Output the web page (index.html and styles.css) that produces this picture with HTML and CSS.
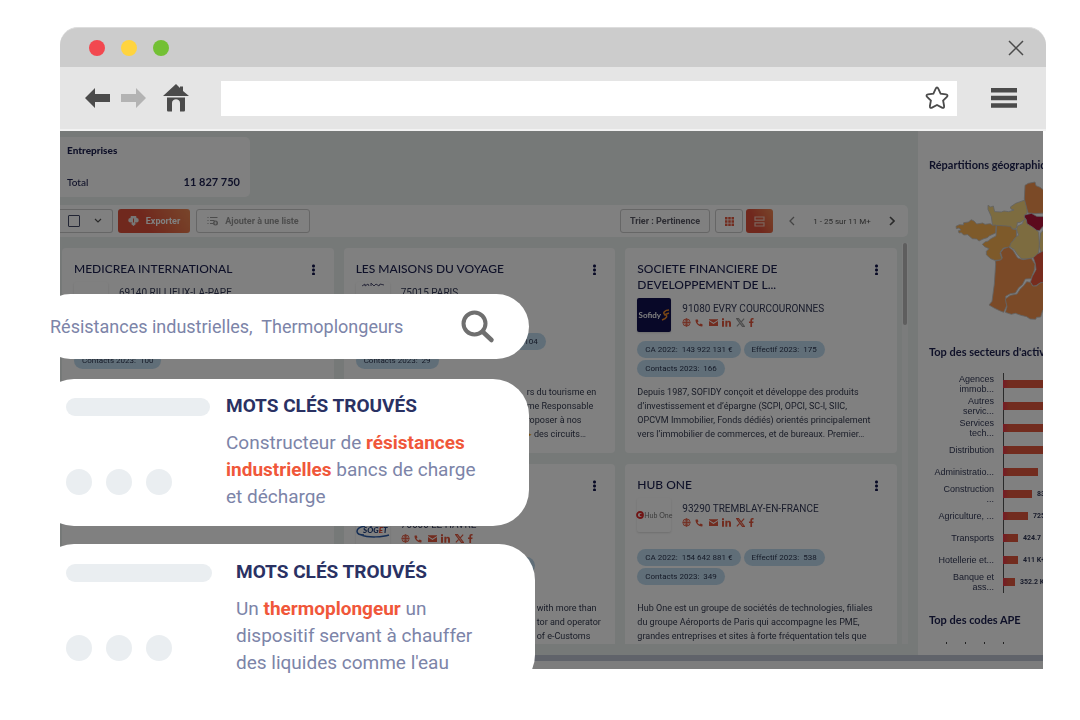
FILE: index.html
```html
<!DOCTYPE html>
<html lang="fr">
<head>
<meta charset="utf-8">
<title>Recherche par mots clés</title>
<link rel="stylesheet" href="styles.css">
</head>
<body>
<svg class="sprite" aria-hidden="true">
  <symbol id="globe" viewBox="0 0 16 16"><g fill="none" stroke="currentColor" stroke-width="1.5"><circle cx="8" cy="8" r="6.5"/><ellipse cx="8" cy="8" rx="2.8" ry="6.5"/><path d="M1.5 8h13M8 1.5v13"/></g></symbol>
  <symbol id="phone" viewBox="0 0 16 16"><path fill="currentColor" d="M2 1h3.5l1.4 4-2 1.8c1 2 2.300 3.300 4.300 4.300l1.800-2 4 1.400V14c0 .6-.4 1-1 1C7 15 1 9 1 2c0-.6.400-1 1-1z"/></symbol>
  <symbol id="mail" viewBox="0 0 16 16"><path fill="currentColor" d="M0 2h16v1.500L8 8.500 0 3.500zM0 5.500l8 5 8-5V14H0z"/></symbol>
  <symbol id="linkedin" viewBox="0 0 16 16"><path fill="currentColor" d="M0 5h3.500v10.500H0zM0 .5h3.500v3H0zM6 5h3.300v1.500C10 5.400 11 4.800 12.400 4.800c2.600 0 3.600 1.700 3.600 4.500v6.200h-3.500V9.900c0-1.400-.4-2.200-1.500-2.200s-1.600.8-1.600 2.200v5.600H6z"/></symbol>
  <symbol id="xlogo" viewBox="0 0 16 16"><path fill="none" stroke="currentColor" stroke-width="2" d="M1 1h3.500L15 15h-3.500zM14.500 1L9 7.200M7 9L1.500 15"/></symbol>
  <symbol id="facebook" viewBox="0 0 16 16"><path fill="currentColor" d="M6 16V9H3.500V6H6V4c0-2.600 1.500-4 3.800-4 1 0 1.900.1 1.900.1v2.700h-1.200C9.300 2.800 9 3.400 9 4.200V6h2.700l-.5 3H9v7z"/></symbol>
</svg>

<main class="stage">
  <section class="browser">
    <header class="titlebar">
      <span class="light light-red"></span><span class="light light-yellow"></span><span class="light light-green"></span>
      <button class="plain close" aria-label="Fermer"><svg width="16" height="16" viewBox="0 0 16 16"><path d="M1 1l14 14M15 1L1 15" stroke="#4b4b4b" stroke-width="1.500"/></svg></button>
    </header>
    <nav class="navbar">
      <button class="plain" aria-label="Précédent"><svg width="26" height="20" viewBox="0 0 26 20"><path d="M0 10L10 0v6h15v8H10v6z" fill="#4b4b4b"/></svg></button>
      <button class="plain forward" aria-label="Suivant"><svg width="26" height="20" viewBox="0 0 26 20"><path d="M25 10L15 0v6H0v8h15v6z" fill="#b3b3b3"/></svg></button>
      <button class="plain home" aria-label="Accueil"><svg width="26" height="28" viewBox="0 0 26 28"><path fill="#4b4b4b" d="M13 0l4 4V2.500h3V7l6 5H0zM4 13.500h18V26c0 1-.5 1.500-1.500 1.500H17V19c0-5-8-5-8 0v8.500H5.500c-1 0-1.500-.5-1.500-1.500z"/></svg></button>
      <div class="address">
        <input type="text" aria-label="Adresse">
        <button class="plain" aria-label="Favori"><svg width="24" height="24" viewBox="0 0 24 24"><path d="M12 1.500c.8 0 1 .5 1.300 1.200l2.300 5 5.400.7c1.600.2 2 1.300.9 2.400l-3.800 3.700 1 5.500c.2 1.700-.7 2.400-2.100 1.600L12 19l-5 2.600c-1.400.8-2.300.1-2.100-1.600l1-5.500-3.800-3.700C1 9.700 1.400 8.600 3 8.400l5.400-.7 2.300-5c.3-.7.500-1.200 1.300-1.200z" fill="none" stroke="#4b4b4b" stroke-width="1.800"/></svg></button>
      </div>
      <button class="plain menu" aria-label="Menu"><svg width="26" height="20" viewBox="0 0 26 20"><path d="M0 0h26v4.500H0zM0 7.700h26v4.500H0zM0 15.300h26v4.500H0z" fill="#4b4b4b"/></svg></button>
    </nav>

    <div class="app">
      <div class="columns">
        <div class="results">
          <section class="summary">
            <h2>Entreprises</h2>
            <p><span>Total</span><strong>11 827 750</strong></p>
          </section>

          <div class="toolbar">
            <div class="select-all"><input type="checkbox" aria-label="Tout sélectionner"><svg width="8" height="6" viewBox="0 0 8 6"><path d="M1 1l3 3 3-3" fill="none" stroke="#555" stroke-width="1.200"/></svg></div>
            <button class="btn btn-primary"><svg width="11" height="10" viewBox="0 0 22 20"><path fill="#eee" d="M5 13a4.500 4.500 0 010-9 6 6 0 0112 0 4.500 4.500 0 010 9h-3v2h3l-6 5-6-5h3v-2z"/><path d="M11 5v8" stroke="#e4573d" stroke-width="2"/></svg>Exporter</button>
            <button class="btn btn-muted"><svg width="11" height="10" viewBox="0 0 22 20"><path d="M1 3h2M6 3h15M1 9h2M6 9h9M1 15h2M6 15h6" stroke="#999" stroke-width="2"/><circle cx="17" cy="14" r="5" fill="#999"/><path d="M17 11v6M14 14h6" stroke="#fff" stroke-width="1.400"/></svg>Ajouter à une liste</button>
            <button class="btn sort">Trier : Pertinence</button>
            <button class="btn view" aria-label="Grille"><svg width="9" height="9" viewBox="0 0 9 9"><path d="M0 0h2.500v2.500H0zM3.250 0h2.500v2.500h-2.500zM6.500 0H9v2.500H6.500zM0 3.250h2.500v2.500H0zM3.250 3.250h2.500v2.500h-2.500zM6.500 3.250H9v2.500H6.500zM0 6.500h2.500V9H0zM3.250 6.500h2.500V9h-2.500zM6.500 6.500H9V9H6.500z" fill="#e4573d"/></svg></button>
            <button class="btn btn-primary view" aria-label="Liste"><svg width="11" height="11" viewBox="0 0 11 11"><path d="M1 1h9v3.200H1zM1 6.800h9V10H1z" fill="none" stroke="#f5c9b8" stroke-width="1.200"/></svg></button>
            <div class="pager">
              <button class="plain" aria-label="Page précédente"><svg width="6" height="10" viewBox="0 0 6 10"><path d="M5 1L1 5l4 4" fill="none" stroke="#888" stroke-width="1.300"/></svg></button>
              <span>1 - 25 sur 11 M+</span>
              <button class="plain" aria-label="Page suivante"><svg width="6" height="10" viewBox="0 0 6 10"><path d="M1 1l4 4-4 4" fill="none" stroke="#555" stroke-width="1.600"/></svg></button>
            </div>
          </div>

          <div class="list">
            <div class="cards">
              <article class="card">
                <div class="card-top">
                  <header><h3>MEDICREA INTERNATIONAL</h3><button class="plain kebab" aria-label="Options"></button></header>
                  <div class="identity"><span class="logo"></span><div><p>69140 RILLIEUX-LA-PAPE</p></div></div>
                </div>
                <ul class="pills"><li class="row-space"></li><li>Contacts 2023:&nbsp; 100</li></ul>
                <p class="desc"></p>
              </article>

              <article class="card">
                <div class="card-top">
                  <header><h3>LES MAISONS DU VOYAGE</h3><button class="plain kebab" aria-label="Options"></button></header>
                  <div class="identity"><span class="logo logo-travel"><svg width="22" height="6" viewBox="0 0 22 6"><path d="M0 4l3-2v2l3-2 1 2M9 4V1l3 3 2-2 3 2 1-2 4 1" fill="none" stroke="#557" stroke-width="1"/></svg></span><div><p>75015 PARIS</p></div></div>
                </div>
                <ul class="pills"><li class="offset">Effectif 2023:&nbsp; 104</li><li>Contacts 2023:&nbsp; 29</li></ul>
                <p class="desc desc-travel">rs du tourisme en<br>me Responsable<br>roposer à nos<br><i>▸</i> des circuits…</p>
              </article>

              <article class="card">
                <div class="card-top">
                  <header><h3>SOCIETE FINANCIERE DE DEVELOPPEMENT DE L...</h3><button class="plain kebab" aria-label="Options"></button></header>
                  <div class="identity">
                    <span class="logo logo-sofidy">Sofidy<svg width="9" height="12" viewBox="0 0 9 12"><path d="M8 1C4 1 1 4 4 5.500S6 9 1 11M3 6l5-2" fill="none" stroke="#f28c28" stroke-width="1.500"/></svg></span>
                    <div><p>91080 EVRY COURCOURONNES</p><svg class="social" width="74" height="9" viewBox="0 0 74 9" role="img" aria-label="Contacts"><use href="#globe" width="9" height="9"/><use href="#phone" x="13" y="1" width="8" height="8"/><use href="#mail" x="27" width="9" height="9"/><use href="#linkedin" x="40" width="9" height="9"/><use href="#xlogo" class="off" x="54" width="9" height="9"/><use href="#facebook" x="65" width="9" height="9"/></svg></div>
                  </div>
                </div>
                <ul class="pills"><li>CA 2022:&nbsp; 143 922 131 €</li><li>Effectif 2023:&nbsp; 175</li><li>Contacts 2023:&nbsp; 166</li></ul>
                <p class="desc">Depuis 1987, SOFIDY conçoit et développe des produits<br>d’investissement et d’épargne (SCPI, OPCI, SC-I, SIIC,<br>OPCVM Immobilier, Fonds dédiés) orientés principalement<br>vers l’immobilier de commerces, et de bureaux. Premier…</p>
              </article>

              <article class="card"></article>

              <article class="card">
                <div class="card-top">
                  <header class="two-lines"><h3></h3><button class="plain kebab" aria-label="Options"></button></header>
                  <div class="identity">
                    <span class="logo"><svg width="34" height="16" viewBox="0 0 34 16"><path d="M9 3C-2 5-1 12 8 12M5 12c8 3 22 2 28 0" fill="none" stroke="#2a5caa" stroke-width="1.500"/><text x="7" y="10" class="soget">SÔG<tspan fill="#e0402c">E</tspan>T</text></svg></span>
                    <div><p>76600 LE HAVRE</p><svg class="social" width="74" height="9" viewBox="0 0 74 9" role="img" aria-label="Contacts"><use href="#globe" width="9" height="9"/><use href="#phone" x="13" y="1" width="8" height="8"/><use href="#mail" x="27" width="9" height="9"/><use href="#linkedin" x="40" width="9" height="9"/><use href="#xlogo" x="54" width="9" height="9"/><use href="#facebook" x="65" width="9" height="9"/></svg></div>
                  </div>
                </div>
                <ul class="pills"><li class="wide"></li><li class="row-space"></li></ul>
                <p class="desc desc-customs">with more than<br>tor and operator<br>of e-Customs</p>
              </article>

              <article class="card">
                <div class="card-top">
                  <header><h3>HUB ONE</h3><button class="plain kebab" aria-label="Options"></button></header>
                  <div class="identity">
                    <span class="logo logo-hub"><svg width="8" height="8" viewBox="0 0 8 8"><circle cx="4" cy="4" r="3" fill="none" stroke="#e02a2a" stroke-width="1.800"/><circle cx="5" cy="4" r="1.300" fill="#e02a2a"/></svg>Hub One</span>
                    <div><p>93290 TREMBLAY-EN-FRANCE</p><svg class="social" width="74" height="9" viewBox="0 0 74 9" role="img" aria-label="Contacts"><use href="#globe" width="9" height="9"/><use href="#phone" x="13" y="1" width="8" height="8"/><use href="#mail" x="27" width="9" height="9"/><use href="#linkedin" x="40" width="9" height="9"/><use href="#xlogo" x="54" width="9" height="9"/><use href="#facebook" x="65" width="9" height="9"/></svg></div>
                  </div>
                </div>
                <ul class="pills"><li>CA 2022:&nbsp; 154 642 881 €</li><li>Effectif 2023:&nbsp; 538</li><li>Contacts 2023:&nbsp; 349</li></ul>
                <p class="desc">Hub One est un groupe de sociétés de technologies, filiales<br>du groupe Aéroports de Paris qui accompagne les PME,<br>grandes entreprises et sites à forte fréquentation tels que</p>
              </article>
            </div>
            <div class="track"><div class="thumb"></div></div>
          </div>
        </div>

        <aside class="side">
          <h2>Répartitions géographiques</h2>
          <svg class="map" width="106" height="142" viewBox="165 94 318 426" role="img" aria-label="Carte de France">
            <g stroke="#c4c4c4" stroke-width="2.500" stroke-linejoin="round">
              <path fill="#fad880" d="M264 167l8 5 8-3 4 17 20 1 8-3 14 2 16-5-9-3-2-6 16-11 22-8 8-3 5 13-1 29-8 5 3 12-15 9-9 1-2 16-9 4-11-8-40-3-12 3-4-30-10-22z"/>
              <path fill="#fcb354" d="M168 230l10-5 12 1 1-7 15-2 7-7 9 4 8 9 18-3 7 4 16-2 6 5 11-1-1 24-18 8-7 6-13 4-12 6-7-6-13-1-14-12-12 1-7-7-7 1-2-7 8-2-6-6-8 2z"/>
              <path fill="#fcb354" d="M290 227l42 3 5 8 12 2 1 22-8 7-7 15-8 9-17 2-7 9-3 7 5 14-3 6-18 1-12-5-13-12 0-10 8-8-13-6-7-7 9-8 9-2 6-6 17-9z"/>
              <path fill="#fad880" d="M376 207l8 15 27 20 5 6 2 37-2 22-4 12-14 6-20 3-14-1-12-13-10-15-13-8 4-12 7-6 8-12 8-4-6-16 2-11 15-8 3-7z"/>
              <path fill="#f6944e" d="M373 148l2-41 10-6 20-4 3 11 12 5 20 15 25 18-3 42-55 4-23-2z"/>
              <path fill="#b8143a" d="M374 196l20-5 16 9 26 1 3 25-11 5-10 12-8-1-13-10-16-10-2-12-6-8z"/>
              <path fill="#fad880" d="M440 190l43-30v150h-60l-5-22 4-38 12-12z"/>
              <path fill="#f6944e" d="M311 297l15-5 13 10 14 23 16 5 25-4 11 18-2 18-10 25-17 1-9 17-11 9-10 16-15 2-14 8 1 16 2 12-9 20-12-5-15-7-17-10 9-11 7-52 4-60-1-9 16-3 5-6-5-16z"/>
              <path fill="#ee583c" d="M412 313l22-12 48-4v130l-42-10-12-18-9 2-11 7-9 2-8-12 6-18 11-20-2-18-6-18z"/>
              <path fill="#f6944e" d="M380 396l12 2 6 11 11 0 11-9 8-2 13 17 42 15-30 38-25 14-6 20-12 1-3 6-17-1-10-7-17-4-17-6-12 3-18-6 5-17-5-23 15-11 20-4 9-14 12-12z"/>
            </g>
          </svg>
          <h2>Top des secteurs d'activité</h2>
          <ul class="chart">
            <li><span>Agences<br>immob...</span><b style="width:60px"></b></li>
            <li><span>Autres<br>servic...</span><b style="width:58px"></b></li>
            <li><span>Services<br>tech...</span><b style="width:52px"></b></li>
            <li><span>Distribution</span><b style="width:46px"></b></li>
            <li><span>Administratio...</span><b style="width:35px"></b></li>
            <li><span>Construction<br>...</span><b style="width:29px"></b><em>831 K+</em></li>
            <li><span>Agriculture, ...</span><b style="width:25px"></b><em>725 K+</em></li>
            <li><span>Transports</span><b style="width:15px"></b><em>424.7 K+</em></li>
            <li><span>Hotellerie et...</span><b style="width:15px"></b><em>411 K+</em></li>
            <li><span>Banque et<br>ass...</span><b style="width:12px"></b><em>352.2 K+</em></li>
          </ul>
          <h2>Top des codes APE</h2>
          <div class="ticks"><i></i><i></i><i></i><i></i></div>
        </aside>
      </div>
      <div class="scroll-x"></div>
    </div>
  </section>

  <section class="overlays">
    <form class="search">
      <input type="text" aria-label="Mots clés" value="Résistances industrielles,  Thermoplongeurs">
      <button class="plain" type="button" aria-label="Rechercher"><svg width="34" height="34" viewBox="0 0 34 34"><g fill="none" stroke="#6f6f6f"><circle cx="13.500" cy="13.500" r="11" stroke-width="4"/><path d="M22 22l8.500 8" stroke-width="4.500" stroke-linecap="round"/></g></svg></button>
    </form>
    <article class="match">
      <div class="skeleton"><span class="bar"></span><span class="dots"><i></i><i></i><i></i></span></div>
      <div><h2>MOTS CLÉS TROUVÉS</h2><p>Constructeur de <b>résistances industrielles</b> bancs de charge et décharge</p></div>
    </article>
    <article class="match match-wide">
      <div class="skeleton"><span class="bar"></span><span class="dots"><i></i><i></i><i></i></span></div>
      <div><h2>MOTS CLÉS TROUVÉS</h2><p>Un <b>thermoplongeur</b> un dispositif servant à chauffer des liquides comme l'eau</p></div>
    </article>
  </section>
</main>
</body>
</html>
```
FILE: styles.css
```css
* { box-sizing: border-box; }
body { margin: 0; background: #fff; font-family: Roboto, "Liberation Sans", sans-serif; }
h2, h3, p, ul { margin: 0; padding: 0; }
ul { list-style: none; }
svg { display: block; flex: none; }
.sprite { display: none; }
.plain { display: flex; align-items: center; justify-content: center; flex: none; margin: 0; padding: 0; border: 0; background: none; }

.stage { position: relative; padding: 27px 34px 24px 60px; overflow: hidden; }

.titlebar { display: flex; align-items: center; gap: 16px; height: 40px; padding: 0 22px 0 29px; background: #ccc; border-top: 1px solid #ddd; border-radius: 18px 18px 0 0; }
.light { width: 16px; height: 16px; border-radius: 50%; }
.light-red { background: #f2484f; }
.light-yellow { background: #ffd43f; }
.light-green { background: #73c034; }
.close { margin-left: auto; }
.navbar { display: flex; align-items: center; height: 64px; padding: 0 29px 0 25px; background: #e5e5e5; border-bottom: 2px solid #f2f2f2; }
.forward { margin-left: 10px; }
.home { margin: 0 32px 0 16px; }
.address { display: flex; align-items: center; flex: 1; height: 35px; padding-right: 8px; background: #fff; }
.address input { flex: 1; min-width: 0; height: 100%; border: 0; padding: 0 10px; background: transparent; font: 14px Roboto, sans-serif; }
.menu { margin-left: 34px; }

.app { margin-right: 3px; background: #ebf2f0; color: #1c2050; filter: brightness(0.5); overflow: hidden; }
.columns { display: grid; grid-template-columns: minmax(0, 1fr) 125px; height: 524px; }
.results { padding: 6px 10px 0 0; }
.summary { display: flex; flex-direction: column; justify-content: space-between; width: 190px; height: 60px; padding: 7px 10px 8px 7px; background: #fff; border-radius: 0 5px 5px 0; }
.summary h2 { font: 900 10px/13px Lato, sans-serif; }
.summary p { display: flex; justify-content: space-between; align-items: center; font: 500 10px/14px Lato, sans-serif; }
.summary strong { font-size: 11px; }

.toolbar { display: flex; align-items: center; height: 32px; margin-top: 8px; padding-right: 13px; background: #fff; border-radius: 0 5px 5px 0; }
.select-all { display: flex; align-items: center; justify-content: space-between; width: 53px; height: 24px; padding: 0 10px 0 8px; border: 1px solid #ccc; border-left: 0; border-radius: 0 3px 3px 0; }
.select-all input { appearance: none; width: 12px; height: 12px; margin: 0; border: 1px solid #444a68; border-radius: 1px; }
.btn { display: flex; align-items: center; justify-content: center; gap: 7px; height: 24px; padding: 0 8px; border: 1px solid #ccc; border-radius: 3px; background: #fff; color: #5c5c68; font: 700 9px/12px Roboto, sans-serif; white-space: nowrap; }
.btn-primary { width: 72px; margin-left: 5px; border: 0; background: linear-gradient(60deg, #e0503a 40%, #f08a55); color: #fff; }
.btn-muted { width: 114px; margin-left: 6px; color: #999; }
.sort { width: 90px; margin-left: auto; }
.view { width: 28px; margin-left: 5px; padding: 0; }
.view.btn-primary { width: 27px; margin-left: 3px; }
.pager { display: flex; align-items: center; justify-content: space-between; width: 106px; margin-left: 16px; color: #555; font-size: 8px; }

.list { display: flex; gap: 5px; height: 407px; padding-top: 6px; }
.cards { display: grid; grid-template-columns: repeat(3, minmax(0, 1fr)); grid-auto-rows: 205px; gap: 11px 10px; flex: 1; margin-top: 5px; padding-left: 2px; overflow: hidden; }
.track { width: 6px; padding: 0 1px; background: #f6f8f8; }
.thumb { height: 82px; border-radius: 2px; background: #bbb; }
.card { display: flex; flex-direction: column; justify-content: space-between; padding: 13px 12px 12px; background: #fff; border-radius: 4px; }
.card header { display: flex; align-items: flex-start; justify-content: space-between; }
.card h3 { max-width: 170px; font: 500 12px/16px Lato, sans-serif; }
.two-lines { min-height: 32px; }
.kebab { width: 3px; height: 11px; margin: 3px 7px 0 0; background: radial-gradient(circle, #10134a 1px, transparent 2px) 0 0 / 3px 4px; }
.identity { display: flex; gap: 11px; height: 34px; margin-top: 5px; color: #333a58; }
.identity p { margin-top: 4px; font: 10px/14px Roboto, sans-serif; white-space: nowrap; }
.social { margin-top: 2px; color: #e4573d; }
.off { color: #999; }
.logo { display: flex; align-items: center; justify-content: center; width: 34px; height: 34px; flex: none; border-radius: 2px; box-shadow: 0 1px 2px #ddd; font: 700 8px Lato, sans-serif; }
.logo-travel { align-items: flex-start; }
.logo-sofidy { background: #100f50; color: #fff; }
.logo-hub { color: #777; font-size: 7px; font-weight: 400; white-space: nowrap; }
.soget { font: italic 900 8px Lato, sans-serif; fill: #1f4080; }
.pills { display: flex; flex-wrap: wrap; gap: 2px 3px; color: #2c3550; font: 8px/17px Roboto, sans-serif; }
.pills li { height: 17px; padding: 0 8px; border-radius: 9px; background: #bfdcf0; white-space: nowrap; }
.pills .row-space { width: 100%; background: none; }
.pills .offset { margin-left: 109px; }
.pills .wide { width: 179px; }
.desc { min-height: 56px; color: #333a50; font: 9px/14px Roboto, sans-serif; white-space: nowrap; }
.desc i { color: #f5a020; font-style: normal; }
.desc-travel { padding-left: 171px; }
.desc-customs { padding-left: 181px; }

.side { padding: 27px 0 0 11px; background: #fff; overflow: hidden; white-space: nowrap; }
.side h2 { font: 700 11px/14px Lato, sans-serif; }
.map { margin: 9px 0 22px 26px; }
.chart { width: 200px; margin-top: 14px; background: linear-gradient(#555, #555) 74px 0 / 1px 100% no-repeat; color: #333a58; font: 9px/10px "Liberation Sans", sans-serif; }
.chart li { display: flex; align-items: center; height: 22px; }
.chart span { width: 65px; text-align: right; }
.chart b { height: 8px; margin-left: 9px; background: linear-gradient(90deg, #e8354a, #e4573d 6px); }
.chart em { margin-left: 5px; font: 700 7px/10px Roboto, sans-serif; }
.chart + h2 { margin-top: 20px; }
.ticks { display: flex; gap: 18px; margin: 15px 0 0 17px; }
.ticks i { width: 1px; height: 2px; background: #444; }
.scroll-x { height: 14px; border-top: 6px solid #bfc6d4; background: #fafafa; }

.overlays { position: absolute; left: 38px; top: 294px; display: flex; flex-direction: column; align-items: flex-start; }
.search { display: flex; align-items: center; justify-content: space-between; width: 491px; height: 65px; padding: 0 34px 0 12px; border-radius: 33px; background: #fff; }
.search input { width: 380px; padding: 0; border: 0; background: none; color: #7c84a8; font: 18px/24px Roboto, sans-serif; }
.match { display: grid; grid-template-columns: 144px 1fr; gap: 16px; width: 491px; min-height: 147px; margin-top: 20px; padding: 14px 40px 14px 28px; border-radius: 36px; background: #fff; }
.match h2 { color: #2a3163; font: 700 19px/26px Roboto, sans-serif; }
.match p { margin-top: 10px; color: #7c84a8; font: 19px/27px Roboto, sans-serif; }
.match b { color: #f0573a; }
.match-wide { grid-template-columns: 146px 1fr; gap: 24px; width: 497px; margin-top: 18px; padding: 15px 40px 14px 28px; }
.skeleton { display: flex; flex-direction: column; gap: 53px; padding-top: 5px; }
.bar { height: 18px; border-radius: 9px; background: #eaeef1; }
.dots { display: flex; gap: 14px; }
.dots i { width: 26px; height: 26px; border-radius: 50%; background: #eaeef1; }
```
